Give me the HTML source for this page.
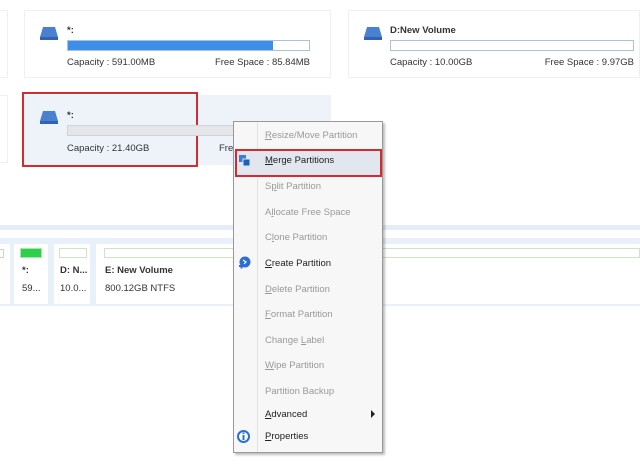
<!DOCTYPE html>
<html><head><style>
*{margin:0;padding:0;box-sizing:border-box}
body{width:640px;height:466px;background:#fff;font-family:"Liberation Sans",sans-serif;font-size:9.5px;color:#333;position:relative;overflow:hidden}
.a{position:absolute}
.card{position:absolute;border:1px solid #eef0f3;background:#fff}
.ico{position:absolute;width:18px;height:14px}
.bar{position:absolute;height:11px;border:1px solid #a9c3dd;background:#fff}
.t{position:absolute;white-space:nowrap}
.r{position:absolute;white-space:nowrap;text-align:right}
.mi{position:absolute;left:265px;color:#999;font-size:9.5px;white-space:nowrap}
.mi.on{color:#222}
u{text-decoration:underline}
</style></head><body>
<div class="card" style="left:-2px;top:10px;width:10px;height:68px"></div>
<div class="card" style="left:-2px;top:95px;width:10px;height:68px"></div>
<div class="card" style="left:24px;top:10px;width:307px;height:68px"></div>
<svg class="ico" style="left:40px;top:27px" viewBox="0 0 18 14"><path d="M3 0h12l3 10H0z" fill="#4a80d0"/><rect x="0" y="10" width="18" height="3" fill="#2f63b5"/></svg>
<div class="t" style="left:67px;top:25px;font-weight:bold">*:</div>
<div class="bar" style="left:67px;top:40px;width:243px"><div style="width:205px;height:9px;background:#3d8ee8"></div></div>
<div class="t" style="left:67px;top:57px">Capacity : 591.00MB</div>
<div class="r" style="right:330px;top:57px">Free Space : 85.84MB</div>

<div class="card" style="left:348px;top:10px;width:292px;height:68px"></div>
<svg class="ico" style="left:364px;top:27px" viewBox="0 0 18 14"><path d="M3 0h12l3 10H0z" fill="#4a80d0"/><rect x="0" y="10" width="18" height="3" fill="#2f63b5"/></svg>
<div class="t" style="left:390px;top:25px;font-weight:bold">D:New Volume</div>
<div class="bar" style="left:390px;top:40px;width:244px"></div>
<div class="t" style="left:390px;top:57px">Capacity : 10.00GB</div>
<div class="r" style="right:6px;top:57px">Free Space : 9.97GB</div>

<div class="a" style="left:24px;top:95px;width:307px;height:70px;background:#eef3fa"></div>
<div class="a" style="left:22px;top:92px;width:176px;height:75px;border:2px solid #d62a31"></div>
<svg class="ico" style="left:40px;top:111px" viewBox="0 0 18 14"><path d="M3 0h12l3 10H0z" fill="#4a80d0"/><rect x="0" y="10" width="18" height="3" fill="#2f63b5"/></svg>
<div class="t" style="left:67px;top:110px;font-weight:bold">*:</div>
<div class="a" style="left:67px;top:125px;width:180px;height:11px;background:#e4e6e9;border:1px solid #cfd3d8"></div>
<div class="t" style="left:67px;top:143px">Capacity : 21.40GB</div>
<div class="t" style="left:219px;top:143px">Free</div>

<div class="a" style="left:0;top:225px;width:640px;height:5px;background:#e3ecf7"></div>
<div class="a" style="left:0;top:238px;width:640px;height:4px;background:#e8f0fa"></div>
<div class="a" style="left:0;top:242px;width:640px;height:64px;background:#e8f0fa"></div>
<div class="a" style="left:0;top:244px;width:10px;height:60px;background:#fff"></div>
<div class="a" style="left:14px;top:244px;width:34px;height:60px;background:#fff"></div>
<div class="a" style="left:54px;top:244px;width:36px;height:60px;background:#fff"></div>
<div class="a" style="left:96px;top:244px;width:544px;height:60px;background:#fff"></div>
<div class="a" style="left:0;top:249px;width:4px;height:9px;border:1px solid #bfe0b0;border-left:none"></div>
<div class="a" style="left:20px;top:248px;width:22px;height:10px;background:#2ed04b;border:1px solid #a6e7ae"></div>
<div class="a" style="left:59px;top:248px;width:28px;height:10px;border:1px solid #cfe4c6"></div>
<div class="a" style="left:104px;top:248px;width:536px;height:10px;border:1px solid #cfe4c6"></div>
<div class="t" style="left:22px;top:265px;font-weight:bold">*:</div>
<div class="t" style="left:60px;top:265px;font-weight:bold">D: N...</div>
<div class="t" style="left:105px;top:265px;font-weight:bold">E: New Volume</div>
<div class="t" style="left:22px;top:283px">59...</div>
<div class="t" style="left:60px;top:283px">10.0...</div>
<div class="t" style="left:105px;top:283px">800.12GB NTFS</div>

<div class="a" style="left:233px;top:121px;width:150px;height:332px;background:#f7f7f7;border:1px solid #999;box-shadow:2px 2px 2px rgba(0,0,0,.25)"></div>
<div class="a" style="left:257px;top:122px;width:1px;height:330px;background:#e2e2e2"></div>
<div class="a" style="left:235px;top:149px;width:147px;height:28px;background:#e2e6ee;border:2px solid #d62a31"></div>
<svg class="a" style="left:239px;top:155px" width="11" height="11" viewBox="0 0 11 11"><rect x="0" y="0" width="7" height="7" fill="#3b7fd6"/><rect x="4" y="4" width="7" height="7" fill="#1e5fb8" stroke="#e2e6ee"/></svg>
<svg class="a" style="left:238px;top:256px" width="13" height="13" viewBox="0 0 13 13"><circle cx="7" cy="6" r="5.5" fill="#2a6fcf"/><path d="M1 10h5M3.5 7.5v5" stroke="#2a6fcf" stroke-width="2"/><path d="M5 4l3 2-2 2" stroke="#fff" stroke-width="1.2" fill="none"/></svg>
<svg class="a" style="left:237px;top:430px" width="13" height="13" viewBox="0 0 13 13"><circle cx="6.5" cy="6.5" r="5.5" fill="#fff" stroke="#2a6fcf" stroke-width="2"/><rect x="5.5" y="5" width="2" height="5" fill="#2a6fcf"/><rect x="5.5" y="2.5" width="2" height="1.5" fill="#2a6fcf"/></svg>
<div class="mi" style="top:130px"><u>R</u>esize/Move Partition</div>
<div class="mi on" style="top:155px"><u>M</u>erge Partitions</div>
<div class="mi" style="top:181px">S<u>p</u>lit Partition</div>
<div class="mi" style="top:207px">A<u>l</u>locate Free Space</div>
<div class="mi" style="top:232px">C<u>l</u>one Partition</div>
<div class="mi on" style="top:258px"><u>C</u>reate Partition</div>
<div class="mi" style="top:284px"><u>D</u>elete Partition</div>
<div class="mi" style="top:309px"><u>F</u>ormat Partition</div>
<div class="mi" style="top:335px">Change <u>L</u>abel</div>
<div class="mi" style="top:360px"><u>W</u>ipe Partition</div>
<div class="mi" style="top:386px">Partition Backup</div>
<div class="mi on" style="top:409px"><u>A</u>dvanced</div>
<div class="a" style="left:371px;top:410px;width:0;height:0;border-left:4px solid #222;border-top:4px solid transparent;border-bottom:4px solid transparent"></div>
<div class="mi on" style="top:431px"><u>P</u>roperties</div>
</body></html>
